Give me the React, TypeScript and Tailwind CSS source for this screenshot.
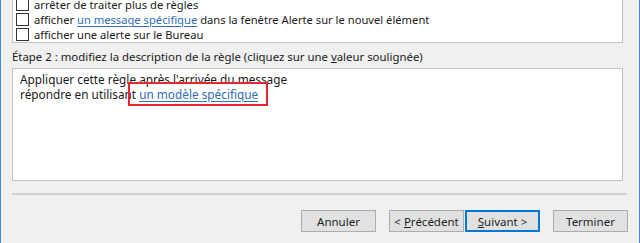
import React from "react";

const font = { fontFamily: '"Noto Sans", "Open Sans", sans-serif' };

const Checkbox: React.FC = () => (
  <span className="w-[13px] h-[13px] border border-[#333333] bg-white shrink-0" />
);

const RuleRow: React.FC<{ children: React.ReactNode }> = ({ children }) => (
  <div className="flex items-center h-[15px] pl-[3px] gap-[5px] whitespace-nowrap">
    <Checkbox />
    <span>{children}</span>
  </div>
);

const Link: React.FC<{ children: React.ReactNode }> = ({ children }) => (
  <span className="text-[#2f6db5] underline underline-offset-[2px] decoration-[#2f6db5]">
    {children}
  </span>
);

const WizardButton: React.FC<{ children: React.ReactNode; primary?: boolean }> = ({
  children,
  primary = false,
}) => (
  <button
    className={`w-[75px] h-[22px] bg-[#e1e1e1] border text-[11.5px] text-[#1e1e1e] ${
      primary ? "border-[#0078d7] shadow-[inset_0_0_0_1px_#0078d7]" : "border-[#adadad]"
    }`}
  >
    {children}
  </button>
);

export default function App() {
  return (
    <div
      className="w-[640px] h-[243px] overflow-hidden bg-[#f0f0f0] border-x border-[#3d8ee0] text-[#1a1a1a] leading-[15px]"
      style={font}
    >
      <div className="pl-[11px] pr-[16px]">
        <div className="-mt-[4px] bg-white border border-[#c2c2c2] text-[11.2px]">
          <RuleRow>arrêter de traiter plus de règles</RuleRow>
          <RuleRow>
            afficher <Link>un message spécifique</Link> dans la fenêtre Alerte sur le nouvel élément
          </RuleRow>
          <RuleRow>afficher une alerte sur le Bureau</RuleRow>
        </div>

        <div className="mt-[6px] h-[16px] leading-[16px] whitespace-nowrap text-[11.4px]">
          Étape 2 : modifiez la description de la règle (cliquez sur une <span className="underline">v</span>aleur soulignée)
        </div>

        <div className="mt-[3px] h-[113px] bg-white border border-[#c2c2c2] pt-[3px] pl-[7px] text-[11.8px]">
          <div>Appliquer cette règle après l'arrivée du message</div>
          <div>
            répondre en utilisant{" "}
            <span className="relative">
              <Link>un modèle spécifique</Link>
              <span className="absolute -left-[11px] -right-[10px] -top-[4px] -bottom-[4px] border-2 border-[#e8262c] pointer-events-none" />
            </span>
          </div>
        </div>
      </div>

      <div className="pl-[11px] pr-[12px] mt-[12px]">
        <div className="h-[2px] bg-[#d0d0d0]" />
      </div>

      <div className="flex justify-end pr-[11px] mt-[15px]">
        <WizardButton>Annuler</WizardButton>
        <div className="flex ml-[13px]">
          <WizardButton>
            &lt; <span className="underline">P</span>récédent
          </WizardButton>
          <div className="ml-[1px]">
            <WizardButton primary>
              <span className="underline">S</span>uivant &gt;
            </WizardButton>
          </div>
        </div>
        <div className="ml-[13px]">
          <WizardButton>Terminer</WizardButton>
        </div>
      </div>
    </div>
  );
}
